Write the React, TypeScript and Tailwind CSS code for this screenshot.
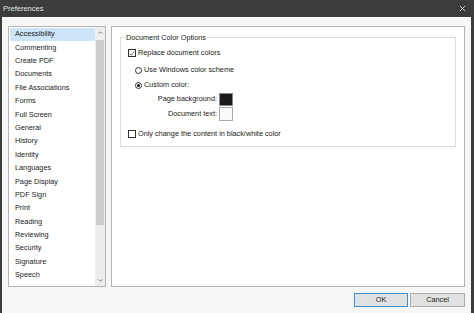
import React from 'react';

const ITEMS = [
  'Accessibility',
  'Commenting',
  'Create PDF',
  'Documents',
  'File Associations',
  'Forms',
  'Full Screen',
  'General',
  'History',
  'Identity',
  'Languages',
  'Page Display',
  'PDF Sign',
  'Print',
  'Reading',
  'Reviewing',
  'Security',
  'Signature',
  'Speech',
];

function Check({ on }: { on?: boolean }) {
  return (
    <span className="flex h-[8px] w-[8px] shrink-0 items-center justify-center border border-[#333] bg-white">
      {on && (
        <svg viewBox="0 0 8 8" className="h-[7px] w-[7px]">
          <path d="M1 4.2 L3 6.2 L7 1.6" fill="none" stroke="#222" strokeWidth="0.9" />
        </svg>
      )}
    </span>
  );
}

function Radio({ on }: { on?: boolean }) {
  return (
    <span className="flex h-[7px] w-[7px] shrink-0 items-center justify-center rounded-full border border-[#333] bg-white">
      {on && <span className="h-[3px] w-[3px] rounded-full bg-[#111]" />}
    </span>
  );
}

export default function App() {
  return (
    <div
      className="flex h-[313px] w-[474px] flex-col bg-[#3c3c3c] text-[7.3px] text-[#1a1a1a]"
      style={{ fontFamily: '"Liberation Sans", Arial, sans-serif' }}
    >
      {/* title bar */}
      <div className="flex h-[17px] shrink-0 items-center justify-between pl-[3px] pr-[8px] text-[#e6e6e6]">
        <span className="text-[7.5px]">Preferences</span>
        <svg viewBox="0 0 8 8" className="h-[7px] w-[7px]">
          <path d="M1 1 L7 7 M7 1 L1 7" stroke="#e0e0e0" strokeWidth="1" />
        </svg>
      </div>

      {/* body */}
      <div className="ml-[2px] mr-[3px] flex flex-1 flex-col bg-[#f6f6f6] px-[6px] pt-[9px] pb-[3px]">
        <div className="flex h-[261px] gap-[5px]">
          {/* category list */}
          <div className="flex w-[98px] border border-[#b4b4b4] bg-white">
            <div className="flex-1 overflow-hidden pl-[1px] pt-[1px]">
              {ITEMS.map((it, i) => (
                <div
                  key={it}
                  className={`flex h-[13.4px] items-center pl-[5px] ${i === 0 ? 'bg-[#cce4f7]' : ''}`}
                >
                  {it}
                </div>
              ))}
            </div>
            <div className="flex w-[10px] flex-col items-center bg-[#ededed]">
              <div className="flex h-[10px] items-center justify-center">
                <svg viewBox="0 0 6 4" className="h-[3px] w-[5px]">
                  <path d="M0.5 3.5 L3 1 L5.5 3.5" fill="none" stroke="#555" strokeWidth="1" />
                </svg>
              </div>
              <div className="mt-[3px] h-[185px] w-[8px] bg-[#cdcdcd]" />
              <div className="flex-1" />
              <div className="flex h-[12px] items-center justify-center">
                <svg viewBox="0 0 6 4" className="h-[3px] w-[5px]">
                  <path d="M0.5 0.5 L3 3 L5.5 0.5" fill="none" stroke="#555" strokeWidth="1" />
                </svg>
              </div>
            </div>
          </div>

          {/* options panel */}
          <div className="flex-1 border border-[#b4b4b4] bg-white px-[8px] pt-[10px]">
            <div className="relative h-[110px] border border-[#dcdcdc] pl-[7px] pt-[10px]">
              <span className="absolute -top-[5px] left-[4px] bg-white px-[1px] leading-[9px]">
                Document Color Options
              </span>
              <div className="flex h-[10px] items-center gap-[2px]">
                <Check on />
                <span>Replace document colors</span>
              </div>
              <div className="mt-[7px] flex h-[10px] items-center gap-[2px] pl-[7px]">
                <Radio />
                <span>Use Windows color scheme</span>
              </div>
              <div className="mt-[5px] flex h-[10px] items-center gap-[2px] pl-[7px]">
                <Radio on />
                <span>Custom color:</span>
              </div>
              <div className="mt-[3px] grid w-[105px] grid-cols-[1fr_14px] items-center gap-x-[2px] gap-y-[1px]">
                <span className="text-right">Page background:</span>
                <span className="h-[13px] w-[14px] border border-[#888] bg-[#1a1a1a]" />
                <span className="text-right">Document text:</span>
                <span className="h-[14px] w-[14px] border border-[#aaa] bg-[#fafafa]" />
              </div>
              <div className="mt-[8px] flex h-[10px] items-center gap-[2px]">
                <Check />
                <span>Only change the content in black/white color</span>
              </div>
            </div>
          </div>
        </div>

        {/* buttons */}
        <div className="mt-[6px] flex justify-end gap-[2px]">
          <button className="flex h-[14px] w-[54px] items-center justify-center border border-[#3c8fd6] bg-[#e1e1e1]">
            OK
          </button>
          <button className="flex h-[14px] w-[55px] items-center justify-center border border-[#adadad] bg-[#e1e1e1]">
            Cancel
          </button>
        </div>
      </div>
    </div>
  );
}
